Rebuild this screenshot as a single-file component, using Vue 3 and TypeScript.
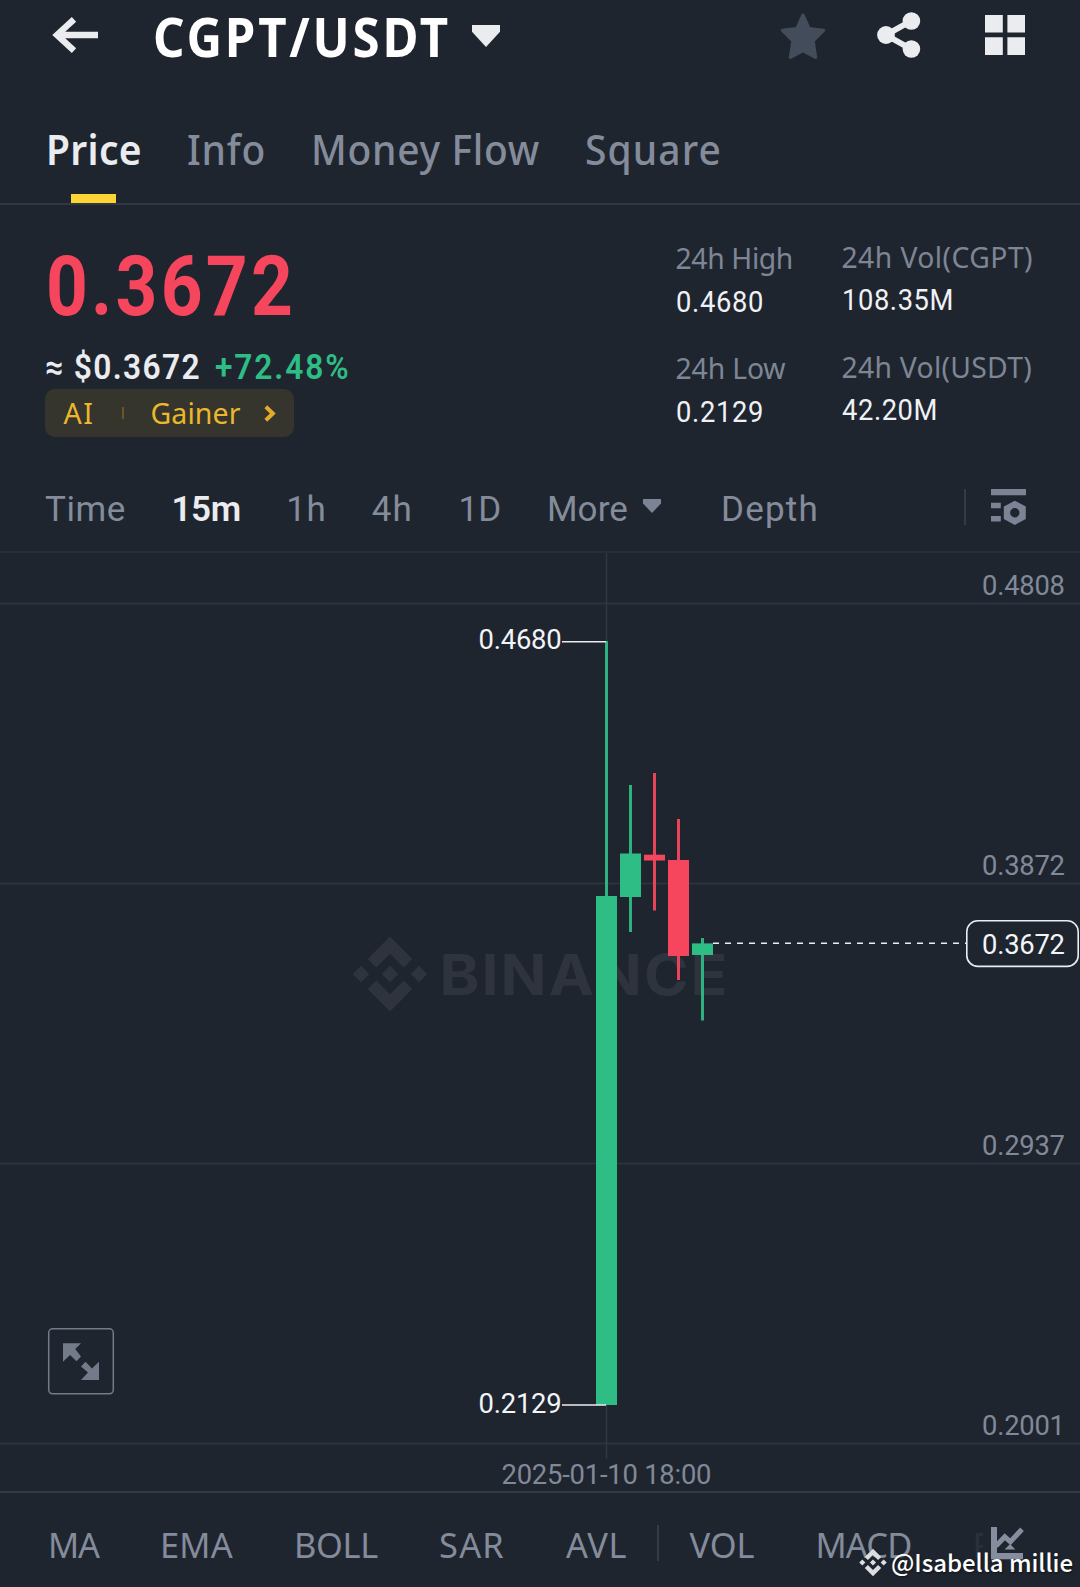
<script setup lang="ts">
import type { Directive } from 'vue'

interface Item { label: string; width: number; active?: boolean }
interface Stat { label: string; labelWidth: number; value: string; valueWidth: number }
interface Candle { x: number; high: number; top: number; bottom: number; low: number; up: boolean }

// Condense factors for the letter shapes, by modifier.
const factors: Record<string, number> = { tight: 0.88, narrow: 0.92, slim: 0.95 }

// Tracks a label so that it fills the given advance width, optionally condensing its glyphs.
const vFit: Directive<HTMLElement, number> = {
  mounted(el, { value, modifiers }) {
    const key = Object.keys(modifiers)[0]
    const scale = key ? factors[key] : 1
    const natural = el.getBoundingClientRect().width
    const count = (el.textContent ?? '').trim().length
    const target = value / scale
    el.style.letterSpacing = `${(target - natural) / count}px`
    if (scale !== 1) {
      el.style.transform = `scaleX(${scale})`
      el.style.transformOrigin = '0 50%'
      el.style.marginRight = `${value - target}px`
    }
  },
}

const tabs: Item[] = [
  { label: 'Price', width: 96, active: true },
  { label: 'Info', width: 79 },
  { label: 'Money Flow', width: 229 },
  { label: 'Square', width: 137 },
]

const statColumns: Stat[][] = [
  [
    { label: '24h High', labelWidth: 117.5, value: '0.4680', valueWidth: 88 },
    { label: '24h Low', labelWidth: 110, value: '0.2129', valueWidth: 88 },
  ],
  [
    { label: '24h Vol(CGPT)', labelWidth: 191.5, value: '108.35M', valueWidth: 112 },
    { label: '24h Vol(USDT)', labelWidth: 190.5, value: '42.20M', valueWidth: 96 },
  ],
]

const intervals: Item[] = [
  { label: 'Time', width: 81 },
  { label: '15m', width: 69, active: true },
  { label: '1h', width: 40 },
  { label: '4h', width: 41 },
  { label: '1D', width: 43 },
]

const mainIndicators: Item[] = [
  { label: 'MA', width: 51 },
  { label: 'EMA', width: 73 },
  { label: 'BOLL', width: 84 },
  { label: 'SAR', width: 66 },
  { label: 'AVL', width: 61 },
]
const subIndicators: Item[] = [
  { label: 'VOL', width: 65 },
  { label: 'MACD', width: 96 },
]

const gridLines = [
  { y: 603.5, label: '0.4808' },
  { y: 883.5, label: '0.3872' },
  { y: 1163.5, label: '0.2937' },
  { y: 1443.5, label: '0.2001' },
]

const candles: Candle[] = [
  { x: 596, high: 641, top: 896, bottom: 1405, low: 1405, up: true },
  { x: 620, high: 785, top: 853.5, bottom: 897, low: 932, up: true },
  { x: 644, high: 773, top: 854.7, bottom: 860.5, low: 910.5, up: false },
  { x: 668, high: 819, top: 860, bottom: 956, low: 980, up: false },
  { x: 692, high: 938, top: 943.4, bottom: 955, low: 1020.5, up: true },
]
</script>

<template>
  <div class="screen">
    <header class="header">
      <svg class="back" width="46" height="36" viewBox="0 0 46 36">
        <path d="M22 2.4 5 18l17 15.6M5 18h41" fill="none" stroke="#eaecef" stroke-width="6.4" />
      </svg>
      <h1><span v-fit.narrow="298">CGPT/USDT</span></h1>
      <svg class="caret" width="28" height="22" viewBox="0 0 28 22"><path d="M0 0h28v6.8L14 22 0 6.8z" fill="#eaecef" /></svg>
      <svg class="star" width="46" height="47" viewBox="0 0 46 47">
        <path d="M23 2.2 29 15.6 43.5 17.4 33 27.8 35.5 44.3 23 37.6 10.5 44.3 13 27.8 2.5 17.4 17 15.6z" fill="#434c5a" stroke="#434c5a" stroke-width="3.4" stroke-linejoin="round" />
      </svg>
      <svg class="share" width="44" height="46" viewBox="0 0 44 46">
        <path d="M34 9 9 23l25 14" fill="none" stroke="#eaecef" stroke-width="6" />
        <g fill="#eaecef"><circle cx="34.4" cy="9" r="8.8" /><circle cx="9" cy="23" r="8.9" /><circle cx="34.4" cy="37" r="8.8" /></g>
      </svg>
      <svg class="apps" width="40" height="40" viewBox="0 0 40 40">
        <path d="M0 0h17.8v17.5H0zM22.4 0H40v17.5H22.4zM0 22.3h17.8V40H0zM22.4 22.3H40V40H22.4z" fill="#eaecef" />
      </svg>
    </header>

    <nav class="tabs">
      <a v-for="tab in tabs" :key="tab.label" class="tab" :class="{ active: tab.active }"><span v-fit.slim="tab.width">{{ tab.label }}</span></a>
    </nav>

    <section class="summary">
      <div class="quote">
        <div class="last"><span v-fit.tight="250">0.3672</span></div>
        <div class="change">
          <span v-fit.narrow="156">≈ $0.3672</span>
          <span v-fit.narrow="135.5" class="up">+72.48%</span>
        </div>
        <div class="tag">
          <span v-fit="31">AI</span>
          <i />
          <span v-fit="90" class="gainer">Gainer</span>
          <svg width="12" height="17" viewBox="0 0 12 17"><path d="m1.8 1.8 7 6.7-7 6.7" fill="none" stroke="#e2ac2a" stroke-width="4" /></svg>
        </div>
      </div>
      <dl v-for="(column, i) in statColumns" :key="i" class="stats">
        <template v-for="stat in column" :key="stat.label">
          <dt><span v-fit="stat.labelWidth">{{ stat.label }}</span></dt>
          <dd><span v-fit.slim="stat.valueWidth">{{ stat.value }}</span></dd>
        </template>
      </dl>
    </section>

    <nav class="intervals">
      <span v-for="item in intervals" :key="item.label" v-fit="item.width" class="cell" :class="{ active: item.active }">{{ item.label }}</span>
      <span v-fit="81" class="cell">More</span>
      <svg class="more-caret" width="18" height="14" viewBox="0 0 18 14"><path d="M0 0h18v4.6L9 14 0 4.6z" fill="#7b8394" /></svg>
      <span v-fit="98" class="depth">Depth</span>
      <i class="divider" />
      <svg class="settings" width="35" height="37" viewBox="0 0 35 37">
        <path d="M0 1h35v6.2H0zM0 14.8h9.8v5.4H0zM0 28h9.8v5.6H0z" fill="#7b8394" />
        <path fill-rule="evenodd" d="M23.8 12.7 34.8 18.6V31L23.8 37 12.8 31V18.6zM23.8 20.1a4.7 4.7 0 1 0 0 9.4 4.7 4.7 0 0 0 0-9.4z" fill="#7b8394" />
      </svg>
    </nav>

    <svg class="chart" width="1080" height="938" viewBox="0 553 1080 938">
      <g stroke="#2c333e" stroke-width="2">
        <line v-for="g in gridLines" :key="g.label" x1="0" x2="1080" :y1="g.y" :y2="g.y" />
        <line x1="606.5" x2="606.5" y1="553" y2="1459" stroke-width="1.5" stroke="#303742" />
      </g>
      <g class="axis" fill="#818998">
        <text v-for="g in gridLines" :key="g.label" x="982" :y="g.y - 8.6" textLength="83">{{ g.label }}</text>
        <text x="501.5" y="1483.7" textLength="210">2025-01-10 18:00</text>
      </g>

      <g fill="#2e333e">
        <path transform="translate(390 974)" d="M0-37.5 22.3-15 13.8-6.5 0-20.3-13.8-6.5-22.3-15zM0 37.5 22.3 15 13.8 6.5 0 20.3-13.8 6.5-22.3 15zM0-8.3 8.3 0 0 8.3-8.3 0zM-29-8.3-20.7 0-29 8.3-37.3 0zM29-8.3 37.3 0 29 8.3 20.7 0z" />
        <text class="brand" x="439.5" y="995" textLength="290" lengthAdjust="spacingAndGlyphs">BINANCE</text>
      </g>

      <g v-for="c in candles" :key="c.x" :fill="c.up ? '#2ebd85' : '#f6465d'">
        <rect :x="c.x + 9" :y="c.high" width="3" :height="c.low - c.high" opacity=".93" />
        <rect :x="c.x" :y="c.top" width="21" :height="c.bottom - c.top" />
      </g>

      <g stroke="#eaecef" stroke-width="1.6">
        <path d="M562 641.7h44M562 1405h44" />
        <path d="M713 943.3h253" stroke-dasharray="6 6" />
        <rect x="966.8" y="920.8" width="111.4" height="45.6" rx="11" fill="#1f252f" />
      </g>
      <g class="axis" fill="#f2f4f7">
        <text x="478.6" y="648.7" textLength="83">0.4680</text>
        <text x="478.6" y="1412.7" textLength="83">0.2129</text>
        <text x="982" y="953.5" textLength="83">0.3672</text>
      </g>

      <rect x="48.7" y="1328.8" width="64.6" height="65" rx="4" fill="none" stroke="#737b8b" stroke-width="1.5" />
      <path d="M63 1343.3H81L75.2 1349 81 1356.5 76.5 1361.3 70 1355 63 1361.7zM99 1380H81L88 1372.5 81 1366.5 85.5 1361.7 92 1368.5 99 1361.7z" fill="#737b8b" />
    </svg>

    <footer class="indicators">
      <span v-for="item in mainIndicators" :key="item.label" v-fit="item.width">{{ item.label }}</span>
      <i class="divider" />
      <span v-for="item in subIndicators" :key="item.label" v-fit="item.width">{{ item.label }}</span>
      <span class="fading">R</span>
      <svg class="chart-icon" width="33" height="33" viewBox="0 0 33 33">
        <path d="M0 0h6v26h26v6.3H0z" fill="#858d9e" />
        <path d="m5 19 8.8-9.2 5.6 5L31 2.2" fill="none" stroke="#858d9e" stroke-width="5" />
        <path d="m19 17 5.4 5.6H13.6z" fill="#858d9e" />
      </svg>
      <div class="credit">
        <svg width="28" height="29" viewBox="-38 -38 76 76">
          <path fill="#dcdddf" d="M0-37.5 22.3-15 13.8-6.5 0-20.3-13.8-6.5-22.3-15zM0 37.5 22.3 15 13.8 6.5 0 20.3-13.8 6.5-22.3 15zM0-8.3 8.3 0 0 8.3-8.3 0zM-29-8.3-20.7 0-29 8.3-37.3 0zM29-8.3 37.3 0 29 8.3 20.7 0z" />
        </svg>
        <span v-fit="182">@Isabella millie</span>
      </div>
    </footer>
  </div>
</template>

<style>
body { background: #1f252f; }
</style>

<style scoped>
.screen {
  width: 1080px;
  height: 1587px;
  overflow: hidden;
  background: #1f252f;
  color: #848c9b;
  font-family: "Noto Sans", sans-serif;
}
.screen * { box-sizing: border-box; }
span { display: inline-block; white-space: nowrap; }
svg { display: block; flex: none; }

.header { display: flex; align-items: center; height: 70px; padding-right: 55px; }
.back { margin-left: 52px; }
h1 { margin: 3px 0 0 55px; width: 298px; font-size: 53.5px; line-height: 74px; font-weight: 700; color: #fff; white-space: nowrap; }
.caret { margin: 2px 0 0 21px; }
.star { margin: 2px 0 0 auto; }
.share { margin-left: 51px; }
.apps { margin-left: 64px; }

.tabs { display: flex; gap: 45px; height: 135px; padding: 49px 0 0 46px; border-bottom: 2px solid #323842; }
.tab { position: relative; height: 84px; font-size: 41px; line-height: 60px; font-weight: 500; }
.tab.active { font-weight: 600; color: #eaecef; }
.tab.active::after { content: ""; position: absolute; left: 25px; bottom: 0; width: 45px; height: 9px; background: #fcd535; }

.summary { display: flex; height: 261px; }
.quote { width: 675.5px; padding: 42px 0 0 45px; font-family: Roboto, sans-serif; white-space: nowrap; }
.last { height: 80px; padding-left: 1px; font-size: 83px; line-height: 80px; font-weight: 700; color: #f6465d; }
.change { display: flex; gap: 14px; margin-top: 20px; font-size: 34.5px; line-height: 40px; font-weight: 600; color: #eaecef; }
.up { color: #2ebd85; }
.tag { display: flex; align-items: center; width: 249px; height: 48px; margin-top: 2px; padding-left: 18.5px; border-radius: 10px; background: #36352d; font-family: "Noto Sans", sans-serif; font-size: 28.5px; color: #e9b82c; }
.tag i { width: 2px; height: 12px; margin-left: 27px; background: #6b5522; }
.gainer { margin-left: 27px; }
.tag svg { margin-left: 23.5px; }
.stats { width: 166px; margin: 35px 0 0; font-size: 28.3px; line-height: 36px; white-space: nowrap; }
.stats + .stats { margin-top: 33.5px; }
.stats dt { height: 36px; color: #7e8695; }
.stats dd { height: 36px; margin: 8px 0 30px; font-family: Roboto, sans-serif; font-size: 28.8px; color: #eff1f4; }
.stats + .stats dd { margin: 7px 0 31px; }

.intervals { display: flex; align-items: center; height: 87px; padding: 0 54px 0 45px; border-bottom: 2px solid #282e38; font-family: Roboto, sans-serif; font-size: 35px; line-height: 40px; }
.cell, .depth { margin-top: 2px; }
.cell + .cell { margin-left: 45.6px; }
.intervals .active { font-weight: 600; color: #eaecef; }
.more-caret { margin: -6px 0 0 15px; }
.depth { margin-left: 60px; }
.divider { flex: none; width: 2px; height: 36px; background: #343b46; }
.intervals .divider { margin: -4px 25px 0 auto; }
.settings { margin-top: -4px; }

.axis { font-family: Roboto, sans-serif; font-size: 27.4px; }
.brand { font-family: Inter, sans-serif; font-size: 56.8px; font-weight: 700; letter-spacing: 2px; }

.indicators { position: relative; display: flex; height: 96px; padding: 32px 0 0 48px; border-top: 2px solid #323945; font-size: 34.4px; line-height: 40px; }
.indicators > span + span { margin-left: 61px; }
.indicators .divider { margin: 0 31px 0 29.5px; }
.indicators > .fading { width: 10px; overflow: hidden; color: #2b313c; }
.chart-icon { margin: 2px 0 0 8.5px; }
.credit { position: absolute; left: 859px; top: 53px; display: flex; align-items: center; gap: 4px; height: 32px; font-family: "Noto Sans CJK SC", sans-serif; font-size: 24px; line-height: 32px; font-weight: 500; color: #fff; text-shadow: 1px 1px 2px rgba(0, 0, 0, .5); }
</style>
